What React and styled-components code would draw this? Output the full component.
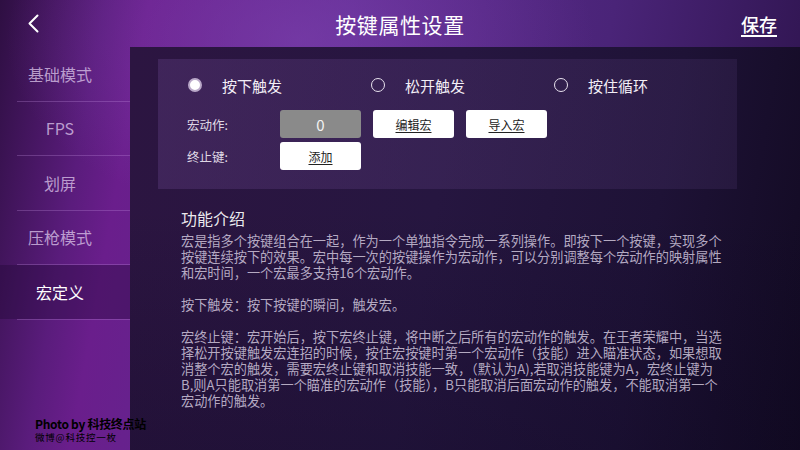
import React from "react";
import styled, { createGlobalStyle } from "styled-components";

const Global = createGlobalStyle`
  html, body { margin: 0; padding: 0; }
  body {
    width: 800px; height: 450px; overflow: hidden;
    font-family: "Noto Sans CJK SC", "Noto Sans", "Liberation Sans", sans-serif;
  }
`;

const Page = styled.div`
  position: relative;
  width: 800px;
  height: 450px;
  display: grid;
  grid-template-rows: 47px 1fr;
  background:
    radial-gradient(ellipse 420px 260px at 300px 40px, rgba(130, 70, 180, 0.55), rgba(130, 70, 180, 0) 70%),
    linear-gradient(100deg, #2e0f42 0%, #5a1c7c 12%, #6a1e8c 17%, #5e2a90 40%, #4a2478 70%, #2a1248 100%);
  overflow: hidden;
`;

const Header = styled.header`
  display: grid;
  grid-template-columns: 1fr auto 1fr;
  align-items: center;
  padding: 0 23px 0 27px;
  color: #fff;
`;

const Back = styled.button`
  justify-self: start;
  background: none;
  border: 0;
  padding: 0;
  display: flex;
  cursor: pointer;
`;

const Title = styled.h1`
  margin: 0;
  font-size: 21px;
  font-weight: 400;
  letter-spacing: 0.6px;
  transform: translateX(-4px);
`;

const Save = styled.a`
  justify-self: end;
  color: #fff;
  font-size: 18px;
  font-weight: 500;
  margin-right: 4px;
  text-decoration: underline;
  text-underline-offset: 3px;
  text-decoration-thickness: 1.5px;
`;

const Body = styled.div`
  display: flex;
  min-height: 0;
`;

const Sidebar = styled.nav`
  width: 130px;
  flex: none;
  display: flex;
  flex-direction: column;
`;

const NavItem = styled.div`
  height: 53.5px;
  display: flex;
  align-items: center;
  justify-content: center;
  padding-right: 10px;
  font-size: 16px;
  color: ${(p) => (p.$active ? "#ffffff" : "rgba(222, 200, 236, 0.75)")};
  background: ${(p) => (p.$active ? "rgba(30, 6, 50, 0.35)" : "transparent")};
`;

const Divider = styled.div`
  height: 1px;
  margin-left: 17px;
  background: rgba(200, 150, 230, 0.28);
`;

const Main = styled.main`
  flex: 1;
  margin-right: 3px;
  padding: 12px 64px 0 28px;
  background:
    linear-gradient(180deg, rgba(0, 0, 0, 0) 40%, rgba(10, 5, 30, 0.25) 100%),
    linear-gradient(100deg, #2c1541 0%, #261640 45%, #1e1236 75%, #120a22 100%);
`;

const Card = styled.section`
  height: 130px;
  box-sizing: border-box;
  padding: 18px 0 0 30px;
  background: linear-gradient(100deg, rgba(100, 65, 135, 0.36), rgba(75, 52, 108, 0.26));
  display: flex;
  flex-direction: column;
`;

const RadioRow = styled.div`
  display: flex;
  height: 16px;
  align-items: center;
  margin-bottom: 17px;
`;

const RadioOption = styled.label`
  width: 183px;
  display: flex;
  align-items: center;
  gap: 20px;
  color: #f2eef6;
  font-size: 15px;
`;

const RadioDot = styled.span`
  width: 14px;
  height: 14px;
  box-sizing: border-box;
  border-radius: 50%;
  border: ${(p) => (p.$checked ? "2px solid #b9a8c8" : "1.5px solid #e8e2ee")};
  background: ${(p) => (p.$checked ? "#ffffff" : "transparent")};
`;

const FieldRow = styled.div`
  display: flex;
  align-items: center;
  gap: 12px;
  margin-left: -1px;
  margin-bottom: 4px;
`;

const FieldLabel = styled.span`
  width: 81px;
  font-size: 12.5px;
  color: rgba(245, 240, 250, 0.9);
`;

const Btn = styled.button`
  width: 81px;
  height: 28px;
  border: 0;
  border-radius: 3px;
  padding: 0;
  font-family: inherit;
  font-size: ${(p) => (p.$gray ? "15px" : "12px")};
  color: ${(p) => (p.$gray ? "#f4f4f4" : "#222")};
  background: ${(p) => (p.$gray ? "#8a8a8a" : "#ffffff")};
  text-decoration: ${(p) => (p.$gray ? "none" : "underline")};
  text-underline-offset: 2px;
  cursor: pointer;
`;

const Intro = styled.section`
  padding: 19px 0 0 23px;
`;

const IntroTitle = styled.h2`
  margin: 0 0 5px;
  font-size: 16px;
  line-height: 20px;
  font-weight: 400;
  color: rgba(255, 255, 255, 0.92);
`;

const Para = styled.p`
  margin: 0 0 16px;
  font-size: 13.2px;
  line-height: 16px;
  color: rgba(215, 205, 225, 0.82);
  white-space: nowrap;
`;

const Watermark = styled.div`
  position: absolute;
  left: 35px;
  bottom: 6px;
  color: #000;
  font-family: "Noto Sans CJK SC", "DejaVu Sans", sans-serif;
`;

const WmMain = styled.div`
  font-size: 12px;
  line-height: 15px;
  font-weight: 700;
  letter-spacing: -0.3px;
`;

const WmSub = styled.div`
  font-size: 9.5px;
  line-height: 13px;
  letter-spacing: 0.8px;
`;

const navItems = ["基础模式", "FPS", "划屏", "压枪模式", "宏定义"];
const radios = ["按下触发", "松开触发", "按住循环"];

export default function App() {
  return (
    <>
      <Global />
      <Page>
        <Header>
          <Back aria-label="返回">
            <svg width="12" height="19" viewBox="0 0 12 19">
              <polyline points="10.5,1.5 2.5,9.5 10.5,17.5" fill="none" stroke="#fff" strokeWidth="2" strokeLinecap="round" strokeLinejoin="round" />
            </svg>
          </Back>
          <Title>按键属性设置</Title>
          <Save>保存</Save>
        </Header>
        <Body>
          <Sidebar>
            {navItems.map((t) => (
              <React.Fragment key={t}>
                <NavItem $active={t === "宏定义"}>{t}</NavItem>
                <Divider />
              </React.Fragment>
            ))}
          </Sidebar>
          <Main>
            <Card>
              <RadioRow>
                {radios.map((r, i) => (
                  <RadioOption key={r}>
                    <RadioDot $checked={i === 0} />
                    {r}
                  </RadioOption>
                ))}
              </RadioRow>
              <FieldRow>
                <FieldLabel>宏动作:</FieldLabel>
                <Btn $gray>0</Btn>
                <Btn>编辑宏</Btn>
                <Btn>导入宏</Btn>
              </FieldRow>
              <FieldRow>
                <FieldLabel>终止键:</FieldLabel>
                <Btn>添加</Btn>
              </FieldRow>
            </Card>
            <Intro>
              <IntroTitle>功能介绍</IntroTitle>
              <Para>
                宏是指多个按键组合在一起，作为一个单独指令完成一系列操作。即按下一个按键，实现多个<br />
                按键连续按下的效果。宏中每一次的按键操作为宏动作，可以分别调整每个宏动作的映射属性<br />
                和宏时间，一个宏最多支持16个宏动作。
              </Para>
              <Para>按下触发：按下按键的瞬间，触发宏。</Para>
              <Para>
                宏终止键：宏开始后，按下宏终止键，将中断之后所有的宏动作的触发。在王者荣耀中，当选<br />
                择松开按键触发宏连招的时候，按住宏按键时第一个宏动作（技能）进入瞄准状态，如果想取<br />
                消整个宏的触发，需要宏终止键和取消技能一致，（默认为A),若取消技能键为A，宏终止键为<br />
                B,则A只能取消第一个瞄准的宏动作（技能），B只能取消后面宏动作的触发，不能取消第一个<br />
                宏动作的触发。
              </Para>
            </Intro>
          </Main>
        </Body>
        <Watermark>
          <WmMain>Photo by 科技终点站</WmMain>
          <WmSub>微博@科技控一枚</WmSub>
        </Watermark>
      </Page>
    </>
  );
}
